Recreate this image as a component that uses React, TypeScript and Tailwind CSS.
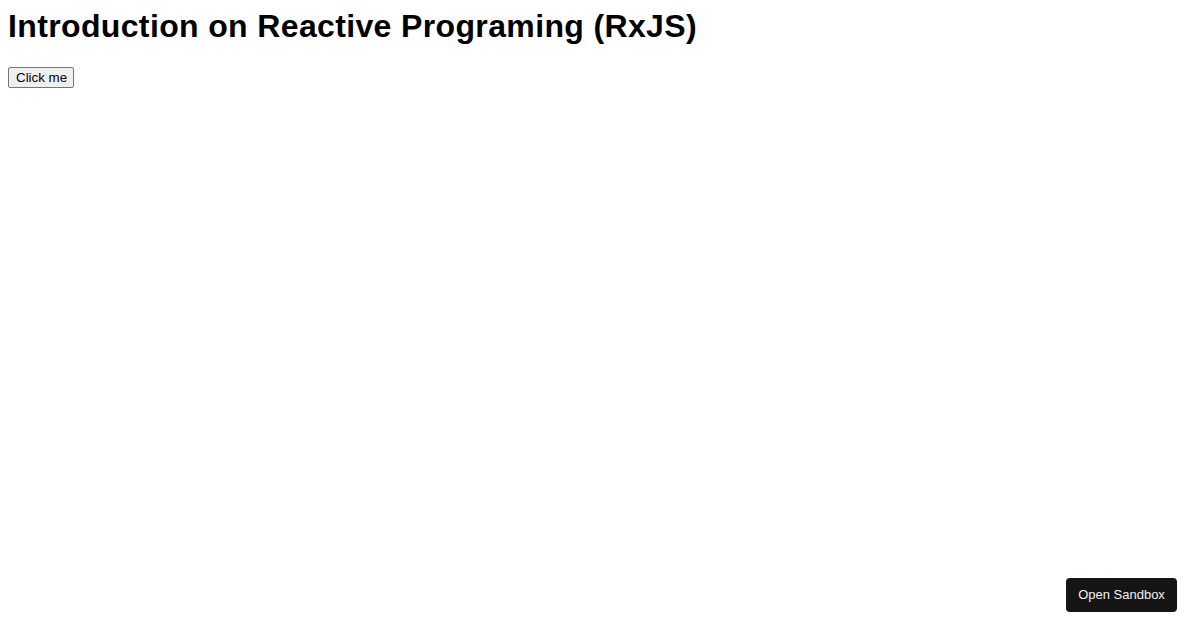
export default function App() {
  return (
    <div className="min-h-[630px] bg-white p-2 font-['Liberation_Sans',Arial,sans-serif] text-black">
      <h1 className="mb-[20px] text-[32px] leading-[37px] font-bold tracking-[0.36px]">
        Introduction on Reactive Programing (RxJS)
      </h1>
      <button className="rounded-[2px] border border-[#767676] bg-[#efefef] pr-[6px] pl-[7px] py-[1px] text-[13.33px] leading-[17px]">
        Click me
      </button>

      {/* floating sandbox button */}
      <button className="fixed right-[23px] bottom-[18px] h-[34px] w-[111px] rounded-[4px] bg-[#151515] text-[13px] text-[#f2f2f2]">
        Open Sandbox
      </button>
    </div>
  );
}
